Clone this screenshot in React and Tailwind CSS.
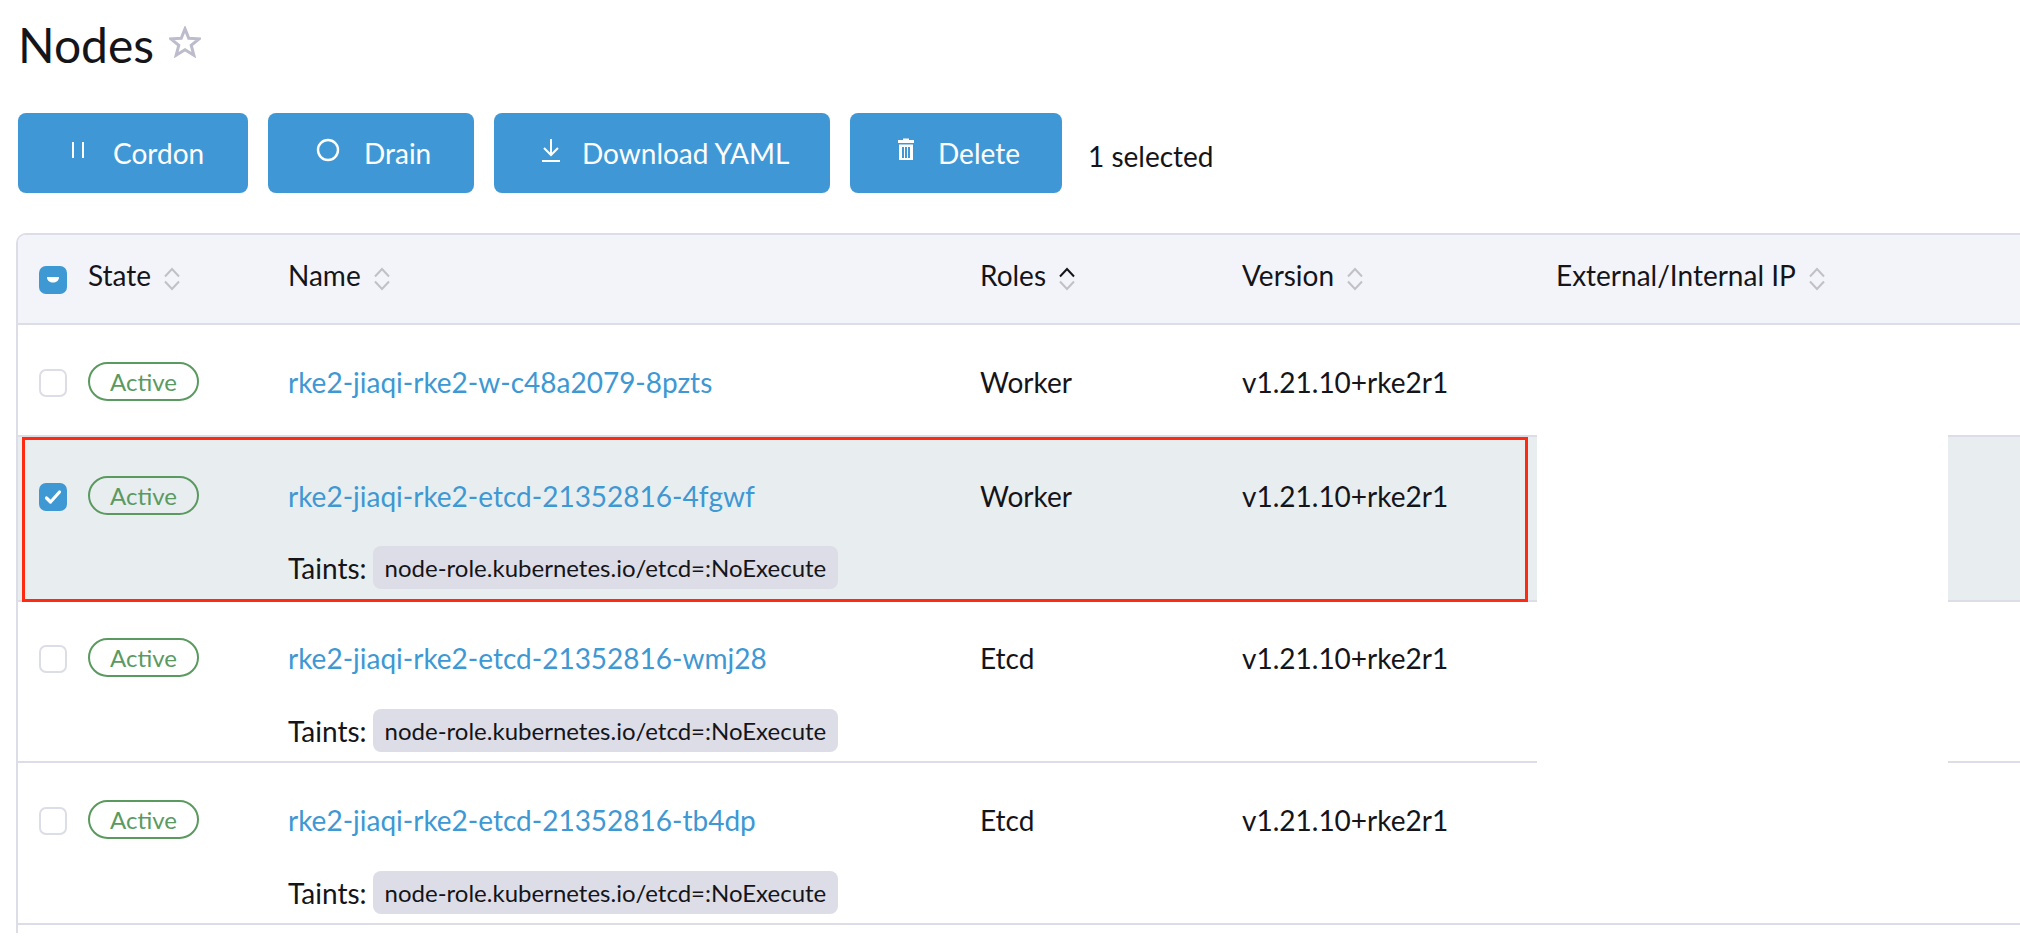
const rows = [
  { name: "rke2-jiaqi-rke2-w-c48a2079-8pzts", role: "Worker", box: "h-[112px] pt-[37px]" },
  { name: "rke2-jiaqi-rke2-etcd-21352816-4fgwf", role: "Worker", selected: true, taint: "mt-[31px]", box: "h-[165px] pt-[39px]" },
  { name: "rke2-jiaqi-rke2-etcd-21352816-wmj28", role: "Etcd", taint: "mt-[32px]", box: "h-[161px] pt-[36px]" },
  { name: "rke2-jiaqi-rke2-etcd-21352816-tb4dp", role: "Etcd", taint: "mt-[32px]", box: "h-[162px] pt-[37px]" },
];

function SortIcon({ active }) {
  return (
    <svg width="16" height="24" viewBox="0 0 16 24" fill="none" strokeWidth="2" className="ml-[13px] mt-[9px]">
      <path d="M1 9.5 L8 2 L15 9.5" stroke={active ? "#141419" : "#c0c0c6"} />
      <path d="M1 14.5 L8 22 L15 14.5" stroke="#c0c0c6" />
    </svg>
  );
}

function Check({ state }) {
  if (state === "none") {
    return <div className="w-[28px] h-[28px] rounded-[7px] border-2 border-[#dcdde7] bg-white" />;
  }
  return (
    <div className="w-[28px] h-[28px] rounded-[7px] bg-[#3d98d3] flex items-center justify-center">
      {state === "all" ? (
        <svg width="18" height="18" viewBox="0 0 18 18">
          <path d="M2.5 10 L6.5 14 L15.5 4" fill="none" stroke="white" strokeWidth="3.2" strokeLinecap="round" strokeLinejoin="round" />
        </svg>
      ) : (
        <svg width="14" height="8" viewBox="0 0 14 8">
          <path d="M1 1 H13 C13 5 10 6.5 7 6.5 C4 6.5 1 5 1 1 Z" fill="white" />
        </svg>
      )}
    </div>
  );
}

function Pause() {
  return (
    <svg width="28" height="24" viewBox="0 0 28 24" fill="none" stroke="white" strokeWidth="2">
      <path d="M9 4 V20 M19 4 V20" />
    </svg>
  );
}

function Circle() {
  return (
    <svg width="28" height="24" viewBox="0 0 28 24" fill="none" stroke="white" strokeWidth="2.4">
      <circle cx="14" cy="12" r="10" />
    </svg>
  );
}

function Download() {
  return (
    <svg width="28" height="24" viewBox="0 0 28 24" fill="none" stroke="white" strokeWidth="2">
      <path d="M14 1 V17 M7 10 L14 17 L21 10 M5 23 H23" />
    </svg>
  );
}

function Trash() {
  return (
    <svg width="28" height="24" viewBox="0 0 28 24" fill="white">
      <path d="M11 2 V0.5 H17 V2 H22 V5 H6 V2 Z" />
      <path fillRule="evenodd" d="M7 6.5 H21 V22 H7 Z M10 9 V20 H12 V9 Z M13 9 V20 H15 V9 Z M16 9 V20 H18 V9 Z" />
    </svg>
  );
}

const buttons = [
  { label: "Cordon", icon: <Pause />, cls: "w-[230px] pl-[46px] gap-[21px]" },
  { label: "Drain", icon: <Circle />, cls: "w-[206px] pl-[46px] gap-[22px]" },
  { label: "Download YAML", icon: <Download />, cls: "w-[336px] pl-[43px] gap-[17px]" },
  { label: "Delete", icon: <Trash />, cls: "w-[212px] pl-[42px] gap-[18px]" },
];

const columns = [
  { label: "Name" },
  { label: "Roles", active: true },
  { label: "Version" },
  { label: "External/Internal IP" },
];

const grid = "grid grid-cols-[70px_200px_692px_262px_314px_1fr]";

export default function App() {
  return (
    <div className="relative w-[2020px] h-[936px] overflow-hidden bg-white text-[#141419] text-[28px] font-['Lato',sans-serif]">
      <div className="h-[113px] pl-[18px] pt-[16px] flex items-start">
        <h1 className="text-[48px] leading-[58px]">Nodes</h1>
        <svg width="32" height="32" viewBox="0 0 34 34" fill="none" stroke="#bcbccc" strokeWidth="3.2" className="ml-[15px] mt-[10px]">
          <path d="M17 3 L21 13 L32 13.6 L23.6 20.6 L26.4 31 L17 25.2 L7.6 31 L10.4 20.6 L2 13.6 L13 13 Z" />
        </svg>
      </div>

      <div className="flex items-center pl-[18px] gap-[20px] h-[80px]">
        {buttons.map((b) => (
          <button key={b.label} className={`${b.cls} h-[80px] rounded-[8px] bg-[#3f98d5] text-white flex items-center`}>
            <span className="-mt-[6px]">{b.icon}</span>
            <span>{b.label}</span>
          </button>
        ))}
        <span className="ml-[6px] mt-[6px]">1 selected</span>
      </div>

      <div className="ml-[16px] mt-[40px] w-[2200px] h-[700px] border-l-2 border-t-2 border-[#dcdde7] rounded-tl-[10px]">
        <div className={`${grid} h-[90px] bg-[#f3f4f9] border-b-2 border-[#dcdde7] rounded-tl-[8px]`}>
          <div className="pl-[21px] pt-[31px]"><Check state="some" /></div>
          <div className="flex items-start pt-[23px] leading-[34px]">
            <span>State</span>
            <SortIcon />
          </div>
          {columns.map((c) => (
            <div key={c.label} className="flex items-start pt-[23px] leading-[34px]">
              <span>{c.label}</span>
              <SortIcon active={c.active} />
            </div>
          ))}
          <div />
        </div>

        {rows.map((r) => (
          <div key={r.name} className={`${grid} ${r.box} border-b-2 border-[#dcdde7] ${r.selected ? "bg-[#e8edf0]" : ""}`}>
            <div className="pl-[21px] pt-[7px]"><Check state={r.selected ? "all" : "none"} /></div>
            <div>
              <span className="flex items-center justify-center w-[111px] h-[39px] rounded-full border-2 border-[#5a9a5f] text-[#5a9a5f] text-[24px]">Active</span>
            </div>
            <div>
              <div className="h-[39px] leading-[41px] text-[#3d98d3]">{r.name}</div>
              {r.taint && (
                <div className={`${r.taint} flex items-center`}>
                  <span>Taints:</span>
                  <span className="ml-[6px] h-[43px] px-[12px] rounded-[8px] bg-[#dcdde7] text-[24px] leading-[43px]">node-role.kubernetes.io/etcd=:NoExecute</span>
                </div>
              )}
            </div>
            <div className="leading-[41px]">{r.role}</div>
            <div className="leading-[41px]">v1.21.10+rke2r1</div>
            <div />
          </div>
        ))}
      </div>

      <div className="absolute left-[1537px] top-[325px] w-[411px] h-[598px] bg-white" />
      <div className="absolute left-[22px] top-[437px] w-[1506px] h-[165px] border-[3px] border-[#ff2a12]" />
    </div>
  );
}
